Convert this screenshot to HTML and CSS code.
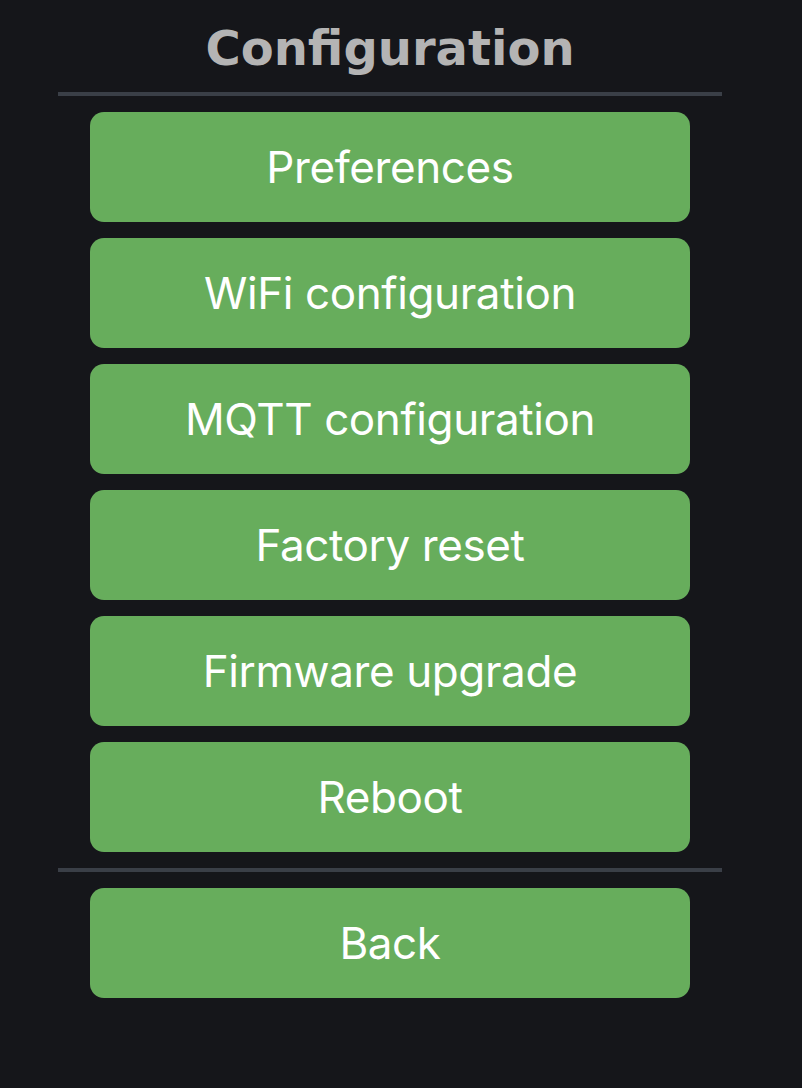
FILE: index.html
```html
<!DOCTYPE html>
<html>
<head>
<meta charset="utf-8">
<link rel="stylesheet" href="styles.css">
</head>
<body>
<div class="page">
  <h1 class="title">Configuration</h1>
  <hr class="rule">
  <div class="menu">
    <button class="btn">Preferences</button>
    <button class="btn">WiFi configuration</button>
    <button class="btn">MQTT configuration</button>
    <button class="btn">Factory reset</button>
    <button class="btn">Firmware upgrade</button>
    <button class="btn">Reboot</button>
  </div>
  <hr class="rule">
  <div class="menu">
    <button class="btn">Back</button>
  </div>
</div>
</body>
</html>
```
FILE: styles.css
```css
html, body {
  margin: 0;
  padding: 0;
  background: #15161a;
}
.page {
  width: 664px;
  margin-left: 58px;
  display: flex;
  flex-direction: column;
}
.title {
  margin: 0;
  height: 92px;
  box-sizing: border-box;
  padding-top: 20px;
  font-family: "DejaVu Sans", sans-serif;
  font-weight: bold;
  font-size: 48px;
  line-height: 56px;
  color: #b4b4b4;
  text-align: center;
}
.rule {
  margin: 0;
  border: 0;
  height: 4px;
  background: #3a3f47;
}
.menu {
  display: flex;
  flex-direction: column;
  align-items: center;
  gap: 16px;
  padding: 16px 0;
}
.btn {
  width: 600px;
  height: 110px;
  border: 0;
  border-radius: 14px;
  background: #67ad5c;
  color: #ffffff;
  font-family: Inter, "Liberation Sans", sans-serif;
  font-size: 44px;
  letter-spacing: -0.4px;
  padding: 0;
}
```
